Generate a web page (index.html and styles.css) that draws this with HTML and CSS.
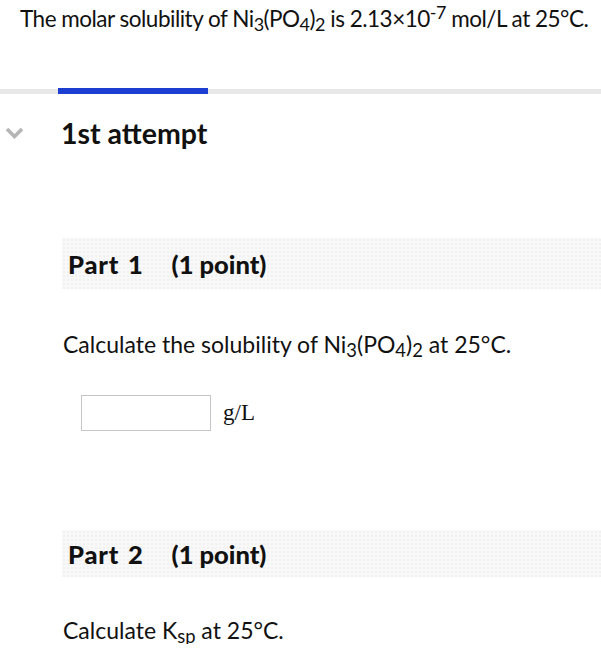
FILE: index.html
```html
<!DOCTYPE html>
<html>
<head>
<meta charset="utf-8">
<link rel="stylesheet" href="styles.css">
</head>
<body>
<p class="intro">The molar solubility of Ni<sub>3</sub>(PO<sub>4</sub>)<sub>2</sub> is 2.13×10<sup>-7</sup> mol/L at 25°C.</p>
<div class="tabs"><div class="tab-active"></div></div>
<div class="attempt">
  <svg class="chev" width="19" height="12" viewBox="0 0 19 12"><path d="M2 2 L9.5 9.5 L17 2" fill="none" stroke="#b5b5b5" stroke-width="3.6"/></svg>
  <h2 class="attempt-title">1st attempt</h2>
</div>
<section class="part">
  <div class="part-head"><span class="pn">Part 1</span><span class="pts">(1 point)</span></div>
  <p class="q">Calculate the solubility of Ni<sub>3</sub>(PO<sub>4</sub>)<sub>2</sub> at 25°C.</p>
  <div class="answer"><span class="field"></span><span class="unit">g/L</span></div>
</section>
<section class="part part2">
  <div class="part-head"><span class="pn">Part 2</span><span class="pts">(1 point)</span></div>
  <p class="q">Calculate K<sub>sp</sub> at 25°C.</p>
</section>
</body>
</html>
```
FILE: styles.css
```css
html, body { margin: 0; padding: 0; background: #fff; }
body { font-family: Lato, "Open Sans", sans-serif; color: #111; width: 601px; overflow: hidden; }
.intro { margin: 0; padding: 6px 0 0 20px; font-size: 22.5px; line-height: 26px; letter-spacing: -0.5px; white-space: nowrap; }
sub { font-size: 0.8em; vertical-align: -0.2em; line-height: 0; }
sup { font-size: 0.8em; vertical-align: 0.45em; line-height: 0; }
.tabs { margin-top: 57px; height: 5px; background: #e8e8e8; position: relative; }
.tab-active { position: absolute; left: 58px; top: -1px; width: 150px; height: 6px; background: #1c3fd1; }
.attempt { display: flex; align-items: center; margin-top: 22px; }
.chev { margin-left: 5px; }
.attempt-title { margin: 0 0 0 37px; font-size: 28.5px; font-weight: 700; line-height: 34px; }
.part { margin-left: 62px; }
.part-head { margin-top: 88px; height: 51px; display: flex; align-items: center; padding-left: 6px; font-size: 25.5px; font-weight: 900; background-color: #f8f8f8; background-image: radial-gradient(circle, #ececec 0.6px, transparent 0.9px); background-size: 4px 4px; }
.pn { word-spacing: 2px; letter-spacing: 0.8px; }
.pts { margin-left: 28px; }
.q { margin: 41px 0 0 1px; font-size: 23px; line-height: 28px; }
.answer { display: flex; align-items: center; margin-top: 37px; margin-left: 19px; }
.field { width: 128px; height: 34px; border: 1px solid #c6c6c6; background: #fff; }
.unit { margin-left: 12px; font-family: "Liberation Serif", serif; font-size: 23px; }
.part2 .part-head { margin-top: 99px; height: 47px; }
.part2 .q { margin-top: 39px; }
```
